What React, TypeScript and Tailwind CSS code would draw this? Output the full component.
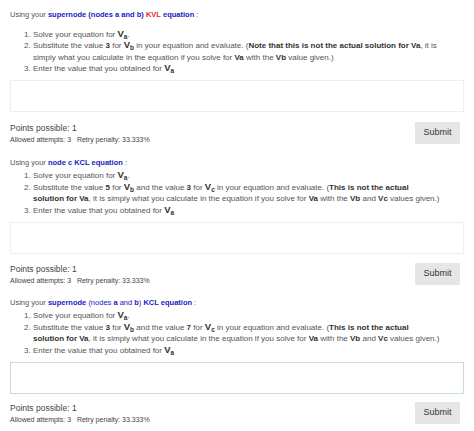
import React from 'react';

const blue = 'text-[#2020c0] font-bold';

function V({ s }: { s: string }) {
  return (
    <b className="text-[9.5px] leading-[0] text-[#333]">
      V<span className="relative top-[2px] text-[6.5px] leading-[0]">{s}</span>
    </b>
  );
}

function Footer({ gap }: { gap: string }) {
  return (
    <div className={'flex justify-between ' + gap}>
      <div className="pt-[1px] text-[#444]">
        <div className="text-[8.5px] leading-[11px]">Points possible: 1</div>
        <div className="text-[7px] leading-[11px]">
          Allowed attempts: 3&nbsp;&nbsp; Retry penalty: 33.333%
        </div>
      </div>
      <button className="mr-[4px] h-[22px] w-[45px] bg-[#e6e6e6] text-[9px] text-[#333]">
        Submit
      </button>
    </div>
  );
}

function Box({ focused }: { focused?: boolean }) {
  return (
    <div
      className={
        'mt-[6px] h-[32px] border bg-white ' +
        (focused ? 'border-[#c5dbe6]' : 'border-[#eeeeee]')
      }
    />
  );
}

export default function App() {
  return (
    <div
      className="min-h-screen bg-white px-[10px] pt-[10px] text-[#555]"
      style={{ fontFamily: '"Liberation Sans", Arial, sans-serif' }}
    >
      {/* Question 1 */}
      <section>
        <p className="text-[7.5px] leading-[10px]">
          Using your <span className={blue}>supernode (nodes a and b)</span>{' '}
          <span className="font-bold text-[#e02a2a]">KVL</span>{' '}
          <span className={blue}>equation</span> :
        </p>
        <ol className="mt-[9px] list-decimal pl-[23px] pr-[20px] text-[8px] leading-[11.3px]">
          <li>Solve your equation for <V s="a" />.</li>
          <li>
            Substitute the value <b className="text-[#333]">3</b> for <V s="b" /> in your equation and evaluate. (
            <b className="text-[#333]">Note that this is not the actual solution for Va</b>, it is simply what you
            calculate in the equation if you solve for <b className="text-[#333]">Va</b> with the{' '}
            <b className="text-[#333]">Vb</b> value given.)
          </li>
          <li>Enter the value that you obtained for <V s="a" /></li>
        </ol>
        <Box />
        <Footer gap="mt-[10px]" />
      </section>

      {/* Question 2 */}
      <section className="mt-[13px]">
        <p className="text-[7.5px] leading-[10px]">
          Using your <span className={blue}>node c KCL equation</span> :
        </p>
        <ol className="mt-[2px] list-decimal pl-[23px] pr-[4px] text-[8px] leading-[11.5px]">
          <li>Solve your equation for <V s="a" />.</li>
          <li>
            Substitute the value <b className="text-[#333]">5</b> for <V s="b" /> and the value{' '}
            <b className="text-[#333]">3</b> for <V s="c" /> in your equation and evaluate. (
            <b className="text-[#333]">
              This is not the actual
              <br />
              solution for Va
            </b>
            , it is simply what you calculate in the equation if you solve for <b className="text-[#333]">Va</b> with
            the <b className="text-[#333]">Vb</b> and <b className="text-[#333]">Vc</b> values given.)
          </li>
          <li>Enter the value that you obtained for <V s="a" /></li>
        </ol>
        <Box />
        <Footer gap="mt-[9px]" />
      </section>

      {/* Question 3 */}
      <section className="mt-[12px]">
        <p className="text-[7.5px] leading-[10px]">
          Using your <span className={blue}>supernode</span>{' '}
          <span className="text-[#2020c0]">
            (nodes <b>a</b> and <b>b</b>)
          </span>{' '}
          <span className={blue}>KCL equation</span> :
        </p>
        <ol className="mt-[2px] list-decimal pl-[23px] pr-[4px] text-[8px] leading-[11.5px]">
          <li>Solve your equation for <V s="a" />.</li>
          <li>
            Substitute the value <b className="text-[#333]">3</b> for <V s="b" /> and the value{' '}
            <b className="text-[#333]">7</b> for <V s="c" /> in your equation and evaluate. (
            <b className="text-[#333]">
              This is not the actual
              <br />
              solution for Va
            </b>
            , it is simply what you calculate in the equation if you solve for <b className="text-[#333]">Va</b> with
            the <b className="text-[#333]">Vb</b> and <b className="text-[#333]">Vc</b> values given.)
          </li>
          <li>Enter the value that you obtained for <V s="a" /></li>
        </ol>
        <Box focused />
        <Footer gap="mt-[8px]" />
      </section>
    </div>
  );
}
